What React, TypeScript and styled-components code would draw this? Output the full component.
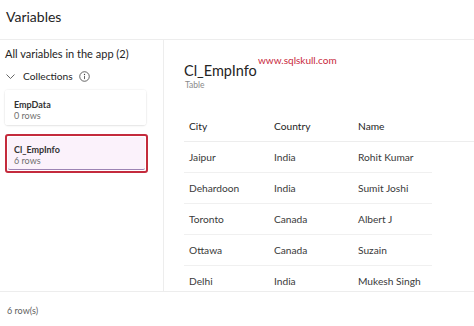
import React from "react";
import styled, { createGlobalStyle } from "styled-components";

const Global = createGlobalStyle`
  html, body { margin: 0; padding: 0; background: #fff; }
  body { font-family: Lato, "Open Sans", sans-serif; color: #242424; }
`;

const Page = styled.div`
  width: 474px;
  height: 326px;
  display: flex;
  flex-direction: column;
  overflow: hidden;
`;

const Header = styled.div`
  height: 40px;
  border-bottom: 1px solid #ededed;
  padding-left: 6px;
  box-sizing: border-box;
`;

const Title = styled.h1`
  margin: 7px 0 0;
  font-size: 14px;
  line-height: 20px;
  font-weight: 400;
  color: #242424;
`;

const Main = styled.div`
  height: 252px;
  display: flex;
  border-bottom: 1px solid #ededed;
  box-sizing: border-box;
`;

const Sidebar = styled.div`
  width: 164px;
  border-right: 1px solid #ededed;
  box-sizing: border-box;
  padding: 6px 0 0 5px;
  display: flex;
  flex-direction: column;
`;

const SideTitle = styled.div`
  font-size: 11px;
  line-height: 16px;
  color: #242424;
`;

const GroupRow = styled.div`
  display: flex;
  align-items: center;
  margin-top: 6px;
  padding-left: 1px;
  font-size: 10.2px;
  line-height: 16px;
  color: #242424;
`;

const Chevron = styled.svg`
  margin-right: 8px;
`;

const Info = styled.svg`
  margin-left: 6px;
`;

const Cards = styled.div`
  display: flex;
  flex-direction: column;
  gap: 9px;
  margin-top: 6px;
`;

const Card = styled.div<{ $selected?: boolean }>`
  box-sizing: border-box;
  height: ${(p) => (p.$selected ? "39px" : "35px")};
  width: ${(p) => (p.$selected ? "143px" : "141px")};
  background: #fff;
  border-radius: 3px;
  padding: ${(p) => (p.$selected ? "1px" : "0")};
  box-shadow: ${(p) =>
    p.$selected ? "none" : "0 0 2px rgba(0,0,0,0.12), 0 1px 2px rgba(0,0,0,0.08)"};
  border: ${(p) => (p.$selected ? "2px solid #c42b3d" : "none")};
  display: flex;
`;

const CardInner = styled.div<{ $selected?: boolean }>`
  flex: 1;
  box-sizing: border-box;
  padding: ${(p) => (p.$selected ? "7px 6px 0" : "9px 9px 0")};
  background: ${(p) => (p.$selected ? "#fbf2fb" : "#fff")};
  border-bottom: ${(p) => (p.$selected ? "1.5px solid #9c84b4" : "none")};
  border-radius: 2px;
`;

const CardName = styled.div`
  font-size: 9px;
  font-weight: 700;
  line-height: 11px;
  color: #333;
`;

const CardSub = styled.div`
  font-size: 9px;
  line-height: 11px;
  color: #707070;
`;

const Content = styled.div`
  flex: 1;
  padding: 21px 0 0 20px;
  position: relative;
  display: flex;
  flex-direction: column;
`;

const Watermark = styled.div`
  position: absolute;
  left: 94px;
  top: 14px;
  font-size: 10px;
  line-height: 12px;
  color: #c8283c;
`;

const TableName = styled.div`
  font-size: 14.5px;
  line-height: 20px;
  color: #242424;
`;

const TableKind = styled.div`
  font-size: 8.5px;
  line-height: 10px;
  color: #8a8a8a;
  margin: -1px 0 0 1px;
`;

const Grid = styled.div`
  margin-top: 21px;
  display: flex;
  flex-direction: column;
`;

const HeadRow = styled.div`
  display: grid;
  grid-template-columns: 85px 84px 1fr;
  height: 30px;
  align-items: center;
  border-bottom: 1px solid #ededed;
  font-size: 10.2px;
  color: #242424;
  padding-left: 5px;
`;

const Row = styled.div<{ $last?: boolean }>`
  display: grid;
  grid-template-columns: 85px 84px 1fr;
  width: 243px;
  height: 30px;
  align-items: center;
  border-bottom: ${(p) => (p.$last ? "none" : "1px solid #f0f0f0")};
  font-size: 10.2px;
  color: #3a3a3a;
  padding-left: 5px;
`;

const Footer = styled.div`
  padding: 13px 0 0 7px;
  font-size: 9px;
  line-height: 12px;
  color: #616161;
`;

const rows = [
  ["Jaipur", "India", "Rohit Kumar"],
  ["Dehardoon", "India", "Sumit Joshi"],
  ["Toronto", "Canada", "Albert J"],
  ["Ottawa", "Canada", "Suzain"],
  ["Delhi", "India", "Mukesh Singh"],
];

export default function App() {
  return (
    <Page>
      <Global />
      <Header>
        <Title>Variables</Title>
      </Header>
      <Main>
        <Sidebar>
          <SideTitle>All variables in the app (2)</SideTitle>
          <GroupRow>
            <Chevron width="9" height="5" viewBox="0 0 9 5">
              <path d="M0.5 0.5 L4.5 4.5 L8.5 0.5" fill="none" stroke="#555" strokeWidth="0.9" />
            </Chevron>
            <span>Collections</span>
            <Info width="11" height="11" viewBox="0 0 12 12">
              <circle cx="6" cy="6" r="5.2" fill="none" stroke="#444" strokeWidth="0.9" />
              <circle cx="6" cy="3.7" r="0.7" fill="#444" />
              <path d="M6 5.3 V8.8" stroke="#444" strokeWidth="0.9" />
            </Info>
          </GroupRow>
          <Cards>
            <Card>
              <CardInner>
                <CardName>EmpData</CardName>
                <CardSub>0 rows</CardSub>
              </CardInner>
            </Card>
            <Card $selected>
              <CardInner $selected>
                <CardName>Cl_EmpInfo</CardName>
                <CardSub>6 rows</CardSub>
              </CardInner>
            </Card>
          </Cards>
        </Sidebar>
        <Content>
          <Watermark>www.sqlskull.com</Watermark>
          <TableName>Cl_EmpInfo</TableName>
          <TableKind>Table</TableKind>
          <Grid>
            <HeadRow>
              <span>City</span>
              <span>Country</span>
              <span>Name</span>
            </HeadRow>
            {rows.map((r, i) => (
              <Row key={i} $last={i === rows.length - 1}>
                <span>{r[0]}</span>
                <span>{r[1]}</span>
                <span>{r[2]}</span>
              </Row>
            ))}
          </Grid>
        </Content>
      </Main>
      <Footer>6 row(s)</Footer>
    </Page>
  );
}
